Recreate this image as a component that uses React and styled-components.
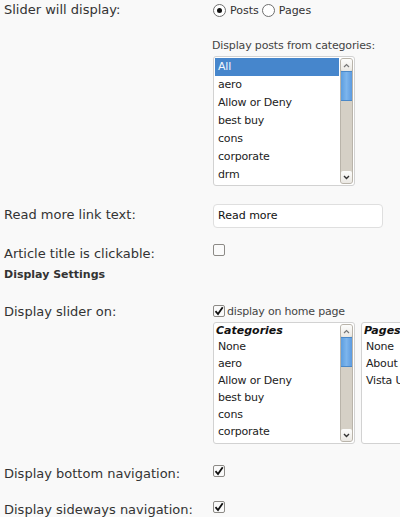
import React from 'react'
import styled, { createGlobalStyle } from 'styled-components'

const Global = createGlobalStyle`
    html, body {
        margin: 0;
        padding: 0;
        overflow: hidden;
        background: #f9f9f9;
    }
    body {
        font-family: "DejaVu Sans", Verdana, sans-serif;
        color: #333;
    }
`

const Page = styled.div`
    padding: 0 0 0 4px;
    width: 500px;
`

const Row = styled.div`
    display: flex;
    align-items: flex-start;
    margin-top: ${props => props.top || 0}px;
`

const Label = styled.div`
    width: 209px;
    flex: none;
    font-size: 13px;
    line-height: 20px;
    color: #333;
    margin-top: ${props => props.offset || 0}px;
`

const Heading = styled.div`
    font-size: 11px;
    font-weight: bold;
    line-height: 14px;
    color: #333;
    margin-top: ${props => props.top || 0}px;
`

const Field = styled.div`
    display: flex;
    flex-direction: column;
    align-items: flex-start;
    margin-top: ${props => props.offset || 0}px;
`

const RadioLine = styled.div`
    display: flex;
    align-items: center;
    height: 20px;
    font-size: 11px;
    color: #333;
`

const Radio = styled.span`
    width: 11px;
    height: 11px;
    border: 1px solid #6e6e6e;
    border-radius: 50%;
    background: #fff;
    display: inline-flex;
    align-items: center;
    justify-content: center;
    margin-right: 4px;
    margin-left: ${props => props.gap || 0}px;
    &::after {
        content: '';
        width: 5px;
        height: 5px;
        border-radius: 50%;
        background: ${props => props.checked ? '#111' : 'transparent'};
    }
`

const Small = styled.div`
    font-size: 11px;
    line-height: 14px;
    color: #444;
    letter-spacing: -0.15px;
    margin-top: ${props => props.top || 0}px;
    margin-left: -1px;
`

const ListBox = styled.div`
    position: relative;
    width: 142px;
    height: ${props => props.h}px;
    border: 1px solid #d2d2d2;
    border-radius: 3px;
    background: #fff;
    overflow: hidden;
    margin-top: ${props => props.top || 0}px;
    margin-right: 6px;
    flex: none;
    padding: 1px 0 0 1px;
    box-sizing: border-box;
`

const Item = styled.div`
    height: ${props => props.h || 18}px;
    line-height: ${props => props.h || 18}px;
    width: 124px;
    padding-left: 3px;
    box-sizing: border-box;
    font-size: 11px;
    color: ${props => props.selected ? '#f4f8fc' : '#222'};
    background: ${props => props.selected ? '#4686cc' : 'transparent'};
    white-space: nowrap;
    letter-spacing: -0.2px;
`

const GroupTitle = styled.div`
    font-size: 11px;
    font-weight: bold;
    font-style: italic;
    line-height: 14px;
    padding-left: 1px;
    color: #111;
`

const Scroll = styled.div`
    position: absolute;
    top: 1px;
    right: 1px;
    bottom: 1px;
    width: 13px;
    display: flex;
    flex-direction: column;
    background: #d5d0c6;
    border: 1px solid #b9b4aa;
    border-radius: 3px;
    box-sizing: border-box;
`

const ScrollButton = styled.div`
    height: 12px;
    flex: none;
    background: linear-gradient(#fdfdfc, #ebe8e3);
    border-radius: 2px;
    display: flex;
    align-items: center;
    justify-content: center;
`

const Thumb = styled.div`
    height: ${props => props.h}px;
    flex: none;
    background: linear-gradient(90deg, #5c9ee0, #7db5ec 50%, #5d9be0);
    border-top: 1px solid #4a88c8;
    border-bottom: 1px solid #4a88c8;
`

const Track = styled.div`
    flex: 1;
`

const TextInput = styled.div`
    width: 170px;
    height: 24px;
    border: 1px solid #dfdfdf;
    border-radius: 4px;
    background: #fff;
    box-sizing: border-box;
    font-size: 11px;
    line-height: 22px;
    padding-left: 4px;
    color: #111;
`

const Box = styled.span`
    width: 12px;
    height: 12px;
    border: 1px solid #8c8a86;
    border-radius: 2px;
    background: #fafafa;
    box-sizing: border-box;
    display: inline-flex;
    align-items: center;
    justify-content: center;
    flex: none;
    margin-top: ${props => props.top || 0}px;
`

const CheckLine = styled.div`
    display: flex;
    align-items: center;
    height: 14px;
    font-size: 11px;
    color: #444;
    letter-spacing: -0.2px;
    gap: 2px;
`

const Boxes = styled.div`
    display: flex;
    margin-top: ${props => props.top || 0}px;
`

function Check({ checked, top }) {
    return <Box top = {top}>
        {checked && <svg width = "10" height = "10" viewBox = "0 0 10 10">
            <path d = "M1.5 5.2 L4 8 L8.7 1.3" fill = "none" stroke = "#111" strokeWidth = "1.8" />
        </svg>}
    </Box>
}

function ScrollBar({ thumb }) {
    return <Scroll>
        <ScrollButton>
            <svg width = "7" height = "5" viewBox = "0 0 7 5"><path d = "M1 4 L3.5 1.5 L6 4" fill = "none" stroke = "#777" strokeWidth = "1.2" /></svg>
        </ScrollButton>
        <Thumb h = {thumb} />
        <Track />
        <ScrollButton>
            <svg width = "7" height = "5" viewBox = "0 0 7 5"><path d = "M1 1 L3.5 3.5 L6 1" fill = "none" stroke = "#333" strokeWidth = "1.4" /></svg>
        </ScrollButton>
    </Scroll>
}

const postCats = ['All', 'aero', 'Allow or Deny', 'best buy', 'cons', 'corporate', 'drm']
const homeCats = ['None', 'aero', 'Allow or Deny', 'best buy', 'cons', 'corporate', 'drm']
const pages = ['None', 'About', 'Vista Ultimate']

export default function App() {
    return (
        <Page>
            <Global />
            <Row>
                <Label>Slider will display:</Label>
                <Field>
                    <RadioLine>
                        <Radio checked />Posts
                        <Radio gap = {3} />Pages
                    </RadioLine>
                    <Small top = {19}>Display posts from categories:</Small>
                    <ListBox h = {130} top = {3}>
                        {postCats.map((c, i) => <Item key = {c} selected = {i === 0}>{c}</Item>)}
                        <ScrollBar thumb = {28} />
                    </ListBox>
                </Field>
            </Row>
            <Row top = {18}>
                <Label offset = {1}>Read more link text:</Label>
                <TextInput>Read more</TextInput>
            </Row>
            <Row top = {16}>
                <Label>Article title is clickable:</Label>
                <Check />
            </Row>
            <Heading top = {4}>Display Settings</Heading>
            <Row top = {20}>
                <Label>Display slider on:</Label>
                <Field offset = {2}>
                    <CheckLine><Check checked />display on home page</CheckLine>
                    <Boxes top = {4}>
                        <ListBox h = {122}>
                            <GroupTitle>Categories</GroupTitle>
                            {homeCats.map(c => <Item key = {c} h = {17}>{c}</Item>)}
                            <ScrollBar thumb = {28} />
                        </ListBox>
                        <ListBox h = {122}>
                            <GroupTitle>Pages</GroupTitle>
                            {pages.map(c => <Item key = {c} h = {17}>{c}</Item>)}
                        </ListBox>
                    </Boxes>
                </Field>
            </Row>
            <Row top = {20}>
                <Label>Display bottom navigation:</Label>
                <Check checked top = {1} />
            </Row>
            <Row top = {16}>
                <Label>Display sideways navigation:</Label>
                <Check checked top = {1} />
            </Row>
        </Page>
    )
}
